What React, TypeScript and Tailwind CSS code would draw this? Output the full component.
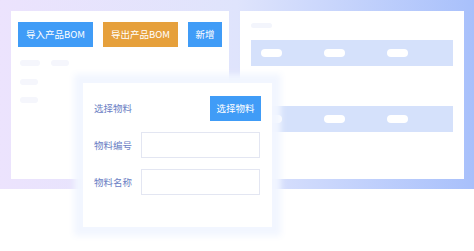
const font = { fontFamily: '"Noto Sans CJK SC", "Noto Sans", sans-serif' };

const Pill = () => <div className="h-[8px] w-[21px] rounded-full bg-white" />;

const App = () => {
  return (
    <div className="relative h-[251px] w-[474px] overflow-hidden bg-white" style={font}>
      {/* 背景 + 两个面板 */}
      <div className="flex h-[189px] gap-[11px] bg-gradient-to-r from-[#ece3fd] via-[#dfe4fc] to-[#a8c0fb] pb-[10px] pl-[11px] pr-[10px] pt-[11px]">
        <div className="w-[218px] bg-white px-[7px] pt-[11px]">
          <div className="flex gap-[10px]">
            <button className="flex h-[25px] w-[75px] items-center justify-center bg-[#409cf7] text-[9.5px] text-white">导入产品BOM</button>
            <button className="flex h-[25px] w-[75px] items-center justify-center bg-[#e6a03b] text-[9.5px] text-white">导出产品BOM</button>
            <button className="flex h-[25px] w-[34px] items-center justify-center bg-[#409cf7] text-[9.5px] text-white">新增</button>
          </div>
          <div className="mt-[13px] flex gap-[11px] pl-[2px]">
            <div className="h-[6px] w-[20px] rounded-sm bg-[#f5f6fc]" />
            <div className="h-[6px] w-[18px] rounded-sm bg-[#f5f6fc]" />
          </div>
          <div className="mt-[13px] pl-[2px]">
            <div className="h-[6px] w-[18px] rounded-sm bg-[#f5f6fc]" />
          </div>
          <div className="mt-[12px] pl-[2px]">
            <div className="h-[6px] w-[18px] rounded-sm bg-[#f5f6fc]" />
          </div>
        </div>
        <div className="flex-1 bg-white px-[11px] pt-[12px]">
          <div className="h-[5px] w-[21px] rounded-sm bg-[#f3f5fc]" />
          <div className="mt-[12px] flex h-[26px] items-center gap-[42px] bg-[#d5e1fb] pl-[10px]">
            <Pill />
            <Pill />
            <Pill />
          </div>
          <div className="mt-[40px] flex h-[26px] items-center gap-[42px] bg-[#d5e1fb] pl-[10px]">
            <Pill />
            <Pill />
            <Pill />
          </div>
        </div>
      </div>

      {/* 浮动卡片 */}
      <div className="absolute left-[83px] top-[83px] flex h-[144px] w-[189px] flex-col gap-[11px] bg-white px-[11px] pt-[13px] shadow-[0_0_6px_9px_rgba(242,246,255,0.97)]">
        <div className="flex items-center justify-between">
          <span className="text-[9.5px] text-[#6a80c4]">选择物料</span>
          <button className="flex h-[25px] w-[51px] items-center justify-center bg-[#409cf7] text-[9.5px] text-white">选择物料</button>
        </div>
        <div className="flex items-center">
          <span className="w-[47px] text-[9.5px] text-[#6a80c4]">物料编号</span>
          <div className="h-[26px] w-[119px] border border-[#e3e6f2] bg-white" />
        </div>
        <div className="flex items-center">
          <span className="w-[47px] text-[9.5px] text-[#6a80c4]">物料名称</span>
          <div className="h-[26px] w-[119px] border border-[#e3e6f2] bg-white" />
        </div>
      </div>
    </div>
  );
};

export default App;
